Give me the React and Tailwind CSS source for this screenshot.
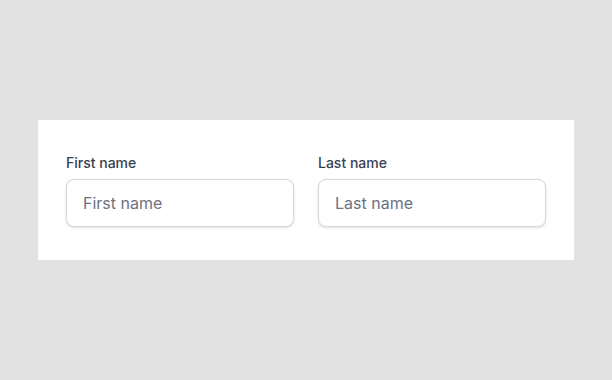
export default function App() {
  return (
    <div className="min-h-screen w-full bg-[#e2e2e2] flex items-center justify-center" style={{ fontFamily: "Inter, 'Noto Sans', sans-serif" }}>
      <div className="w-[536px] h-[140px] bg-white px-7 pt-[33px] pb-[33px]">
        <div className="grid grid-cols-2 gap-6">
          <div className="flex flex-col">
            <label className="text-sm font-medium leading-5 text-[#374151]">First name</label>
            <input
              placeholder="First name"
              className="mt-[6px] h-12 w-full rounded-lg border border-[#d5d7df] bg-white px-4 text-base text-gray-900 placeholder:text-[#6b7280] shadow-sm outline-none"
            />
          </div>
          <div className="flex flex-col">
            <label className="text-sm font-medium leading-5 text-[#374151]">Last name</label>
            <input
              placeholder="Last name"
              className="mt-[6px] h-12 w-full rounded-lg border border-[#d5d7df] bg-white px-4 text-base text-gray-900 placeholder:text-[#6b7280] shadow-sm outline-none"
            />
          </div>
        </div>
      </div>
    </div>
  );
}
